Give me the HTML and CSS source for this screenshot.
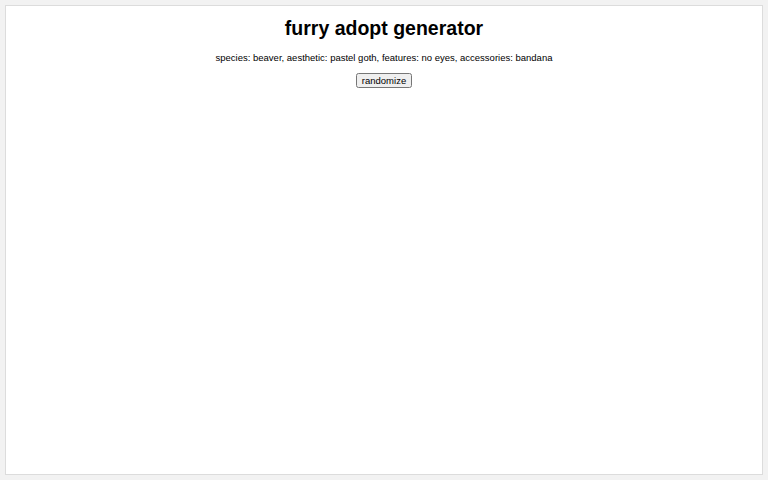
FILE: index.html
```html
<!DOCTYPE html>
<html lang="en">

<head>
    <meta charset="UTF-8" />
    <meta name="viewport" content="width=device-width, initial-scale=1.0" />
    <title>furry adopt generator</title>
    <link rel="stylesheet" href="styles.css">
</head>

<body>
    <div class="caja">
        <h1>furry adopt generator</h1>
        <p id="resultado">species: beaver, aesthetic: pastel goth, features: no eyes, accessories: bandana</p>
        <button id="bRandom">randomize</button>
    </div>
    <script>
        //listas de opciones
        let especies = ['beaver', 'wolf', 'fox', 'cat', 'dragon', 'rabbit', 'deer', 'otter']
        let esteticas = ['pastel goth', 'cottagecore', 'punk', 'vaporwave', 'scene', 'grunge']
        let rasgos = ['no eyes', 'extra tails', 'horns', 'wings', 'glowing spots', 'heterochromia']
        let accesorios = ['bandana', 'collar', 'glasses', 'scarf', 'piercings', 'hat']

        let resultado = document.getElementById('resultado')
        let bRandom = document.getElementById('bRandom')

        bRandom.addEventListener('click', randomizar)

        //devuelve un elemento al azar de la lista
        function azar(lista) {
            return lista[Math.floor(Math.random() * lista.length)]
        }

        //Funcion que genera un adopt nuevo
        function randomizar() {
            resultado.textContent = `species: ${azar(especies)}, aesthetic: ${azar(esteticas)}, features: ${azar(rasgos)}, accessories: ${azar(accesorios)}`
        }
    </script>
</body>

</html>
```

FILE: styles.css
```css
* {
    box-sizing: border-box;
    margin: 0;
    padding: 0;
}

html,
body {
    height: 100%;
}

body {
    background-color: #f2f2f2;
    padding: 5px;
    font-family: "Liberation Sans", Arial, sans-serif;
}

.caja {
    height: 100%;
    background-color: white;
    border: 1px solid #dcdcdc;
    text-align: center;
    padding-top: 11px;
}

h1 {
    font-size: 19.5px;
    margin-bottom: 12px;
}

p {
    font-size: 9.5px;
    margin-bottom: 7px;
}

button {
    font-family: "Liberation Sans", Arial, sans-serif;
    font-size: 9.5px;
    padding: 0 4px;
}
```
